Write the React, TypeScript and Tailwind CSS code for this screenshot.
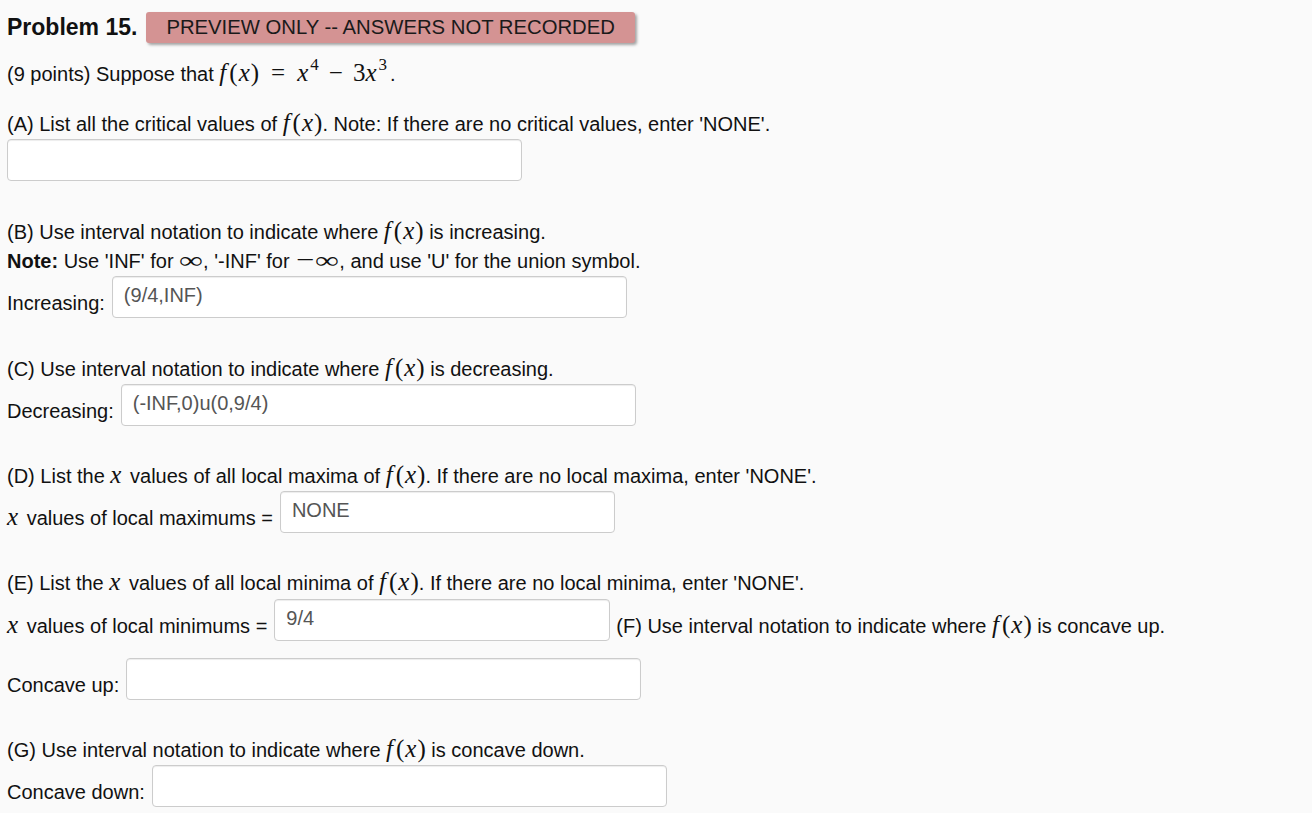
import React from 'react';

const sans = { fontFamily: '"Liberation Sans", Arial, sans-serif' };

function M({ children }: { children: React.ReactNode }) {
  return (
    <span className="font-['Liberation_Serif',serif] text-[25px] leading-none">{children}</span>
  );
}

function Fx() {
  return (
    <M>
      <i className="mr-[3px]">f</i>(<i className="mx-[1px]">x</i>)
    </M>
  );
}

function X() {
  return (
    <M>
      <i className="mr-[3px]">x</i>
    </M>
  );
}

function Inf({ minus }: { minus?: boolean }) {
  return (
    <M>
      {minus && <span className="ml-[3px] mr-[3px] inline-block scale-x-[1.3]">−</span>}
      <span className="inline-block w-[24px] origin-left scale-x-[1.45] text-[23px]">∞</span>
    </M>
  );
}

function Box({ value, width }: { value?: string; width: string }) {
  return (
    <div
      className={`${width} h-[42px] shrink-0 rounded-[4px] border border-[#cccccc] bg-white pl-[11px] pt-[4px] text-[20px] leading-[29px] text-[#555555] shadow-[inset_0_1px_1px_rgba(0,0,0,0.075)]`}
    >
      {value}
    </div>
  );
}

function Line({ children, className = '' }: { children: React.ReactNode; className?: string }) {
  return <div className={`h-[29px] whitespace-nowrap leading-[29px] ${className}`}>{children}</div>;
}

function Row({
  label,
  value,
  width,
  after,
  className = '',
}: {
  label: React.ReactNode;
  value?: string;
  width: string;
  after?: React.ReactNode;
  className?: string;
}) {
  return (
    <div className={`flex h-[42px] items-end whitespace-nowrap ${className}`}>
      <span className="mr-[7px] h-[29px] pb-[2px] leading-[29px]">{label}</span>
      <Box value={value} width={width} />
      {after && <span className="ml-[6px] h-[29px] pb-[2px] leading-[29px]">{after}</span>}
    </div>
  );
}

export default function App() {
  return (
    <div className="min-h-screen bg-[#fafafa] px-[7px] pt-[12px] text-[20px] text-[#111111]" style={sans}>
      <div className="flex h-[31px] items-center">
        <span className="text-[23px] font-bold">Problem 15.</span>
        <span className="ml-[9px] flex h-[31px] items-center rounded-[3px] bg-[#d49393] px-[20px] text-[20.3px] text-[#1a1a1a] shadow-[2px_2px_3px_rgba(0,0,0,0.35)]">
          PREVIEW ONLY -- ANSWERS NOT RECORDED
        </span>
      </div>

      <Line className="mt-[17px]">
        (9 points) Suppose that <Fx />
        <M>
          <span className="mx-[12px]">=</span>
          <i>x</i>
          <sup className="relative -top-[11px] ml-[2px] text-[17px]">4</sup>
          <span className="mx-[10px]">−</span>3<i>x</i>
          <sup className="relative -top-[11px] ml-[2px] text-[17px]">3</sup>
        </M>
        <span className="ml-[3px]">.</span>
      </Line>

      <Line className="mt-[21px]">
        (A) List all the critical values of <Fx />. Note: If there are no critical values, enter 'NONE'.
      </Line>
      <Box width="w-[515px]" />

      <Line className="mt-[37px]">
        (B) Use interval notation to indicate where <Fx /> is increasing.
      </Line>
      <Line>
        <b>Note:</b> Use 'INF' for <Inf />, '-INF' for <Inf minus />, and use 'U' for the union symbol.
      </Line>
      <Row label="Increasing:" value="(9/4,INF)" width="w-[515px]" />

      <Line className="mt-[37px]">
        (C) Use interval notation to indicate where <Fx /> is decreasing.
      </Line>
      <Row label="Decreasing:" value="(-INF,0)u(0,9/4)" width="w-[515px]" />

      <Line className="mt-[36px]">
        (D) List the <X /> values of all local maxima of <Fx />. If there are no local maxima, enter 'NONE'.
      </Line>
      <Row
        label={
          <>
            <X /> values of local maximums =
          </>
        }
        value="NONE"
        width="w-[335px]"
      />

      <Line className="mt-[36px]">
        (E) List the <X /> values of all local minima of <Fx />. If there are no local minima, enter 'NONE'.
      </Line>
      <Row
        className="mt-[1px]"
        label={
          <>
            <X /> values of local minimums =
          </>
        }
        value="9/4"
        width="w-[336px]"
        after={
          <>
            (F) Use interval notation to indicate where <Fx /> is concave up.
          </>
        }
      />

      <Row className="mt-[17px]" label="Concave up:" width="w-[515px]" />

      <Line className="mt-[36px]">
        (G) Use interval notation to indicate where <Fx /> is concave down.
      </Line>
      <Row label="Concave down:" width="w-[515px]" />
    </div>
  );
}
